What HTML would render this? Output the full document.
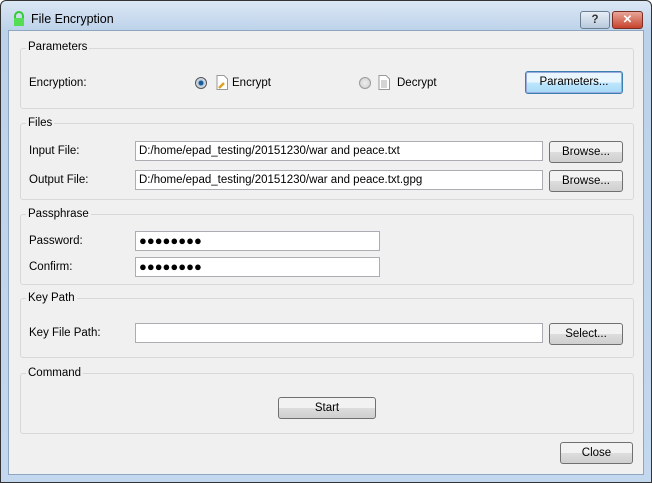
<!DOCTYPE html><html><head><style>
*{box-sizing:border-box}
body{margin:0;width:652px;height:483px;overflow:hidden;font-family:"Liberation Sans",sans-serif;font-size:11.5px;color:#000;background:#fff}
.win{position:absolute;left:0;top:0;width:652px;height:483px;border:1px solid #333;border-radius:6px 6px 0 0;background:linear-gradient(#dbe7f4,#bcd2ea 30px,#c3d8ee);}
.client{position:absolute;left:8px;top:30px;width:636px;height:445px;background:#f0f0f0;border:1px solid #8ea6c0}
.title{position:absolute;left:30px;top:11px;font-size:12.5px}
.g{position:absolute;left:11px;width:614px;border:1px solid #d8d8d8;border-radius:3px}
.gt{position:absolute;left:17px;background:#f0f0f0;padding:0 2px}
.a{position:absolute}
.btn{position:absolute;height:22px;border:1px solid #707070;border-radius:3px;background:linear-gradient(#f2f2f2 50%,#dddddd 50%,#cfcfcf);text-align:center;line-height:20px}
.in{position:absolute;height:20px;border:1px solid #abadb3;background:#fff;padding-left:3px;line-height:18px}
.dot{font-size:13px;letter-spacing:0px}
</style></head><body>
<div class="win">
<svg class="a" style="left:11px;top:10px" width="14" height="16"><path d="M3 8V5a4 4 0 0 1 8 0v3" fill="none" stroke="#3c3" stroke-width="2"/><rect x="2" y="7" width="10" height="8" fill="#5d5"/></svg>
<div class="title">File Encryption</div>
<div class="a" style="left:579px;top:10px;width:30px;height:18px;border:1px solid #6b7d91;border-radius:3px;background:linear-gradient(#e6eef7,#b8c9dc);text-align:center;font-weight:bold;color:#333;line-height:16px">?</div>
<div class="a" style="left:611px;top:10px;width:31px;height:18px;border:1px solid #7a2e24;border-radius:3px;background:linear-gradient(#e8a699,#c7432c);text-align:center;font-weight:bold;color:#fff;line-height:16px">✕</div>
</div>
<div class="client" style="left:8px">
<div class="g" style="top:17px;height:61px"></div><div class="gt" style="top:10px">Parameters</div>
<div class="a" style="left:20px;top:46px">Encryption:</div>
<div class="a" style="left:186px;top:46px;width:12px;height:12px;border-radius:50%;border:1px solid #555;background:radial-gradient(#1a5a9a 30%,#bcd 40%,#eee)"></div>
<svg class="a" style="left:207px;top:44px" width="12" height="15"><path d="M1 .5h7l3.5 3.5v10.5H1z" fill="#fff" stroke="#999"/><path d="M3 13l5-5" stroke="#e0a020" stroke-width="2.5"/></svg>
<div class="a" style="left:223px;top:46px">Encrypt</div>
<div class="a" style="left:350px;top:46px;width:12px;height:12px;border-radius:50%;border:1px solid #999;background:radial-gradient(#eee,#ccc)"></div>
<svg class="a" style="left:369px;top:44px" width="12" height="15"><path d="M1 .5h7l3.5 3.5v10.5H1z" fill="#fff" stroke="#999"/><path d="M3 6h6M3 8h6M3 10h6M3 12h6" stroke="#aaa"/></svg>
<div class="a" style="left:388px;top:46px">Decrypt</div>
<div class="btn" style="left:516px;top:40px;width:98px;height:23px;border-color:#3c7fb1;background:linear-gradient(#eaf6fd 50%,#bee6fd 50%,#a7d9f5);box-shadow:0 0 0 1px #9ad inset">Parameters...</div>

<div class="g" style="top:92px;height:77px"></div><div class="gt" style="top:86px">Files</div>
<div class="a" style="left:20px;top:114px">Input File:</div>
<div class="in" style="left:126px;top:110px;width:408px">D:/home/epad_testing/20151230/war and peace.txt</div>
<div class="btn" style="left:540px;top:110px;width:74px">Browse...</div>
<div class="a" style="left:20px;top:143px">Output File:</div>
<div class="in" style="left:126px;top:139px;width:408px">D:/home/epad_testing/20151230/war and peace.txt.gpg</div>
<div class="btn" style="left:540px;top:139px;width:74px">Browse...</div>

<div class="g" style="top:183px;height:71px"></div><div class="gt" style="top:177px">Passphrase</div>
<div class="a" style="left:20px;top:204px">Password:</div>
<div class="in dot" style="left:126px;top:200px;width:245px">●●●●●●●●</div>
<div class="a" style="left:20px;top:230px">Confirm:</div>
<div class="in dot" style="left:126px;top:226px;width:245px">●●●●●●●●</div>

<div class="g" style="top:267px;height:60px"></div><div class="gt" style="top:261px">Key Path</div>
<div class="a" style="left:20px;top:296px">Key File Path:</div>
<div class="in" style="left:126px;top:292px;width:408px"></div>
<div class="btn" style="left:540px;top:292px;width:74px">Select...</div>

<div class="g" style="top:342px;height:61px"></div><div class="gt" style="top:336px">Command</div>
<div class="btn" style="left:269px;top:366px;width:98px">Start</div>
<div class="btn" style="left:551px;top:411px;width:73px">Close</div>
</div>
</body></html>
